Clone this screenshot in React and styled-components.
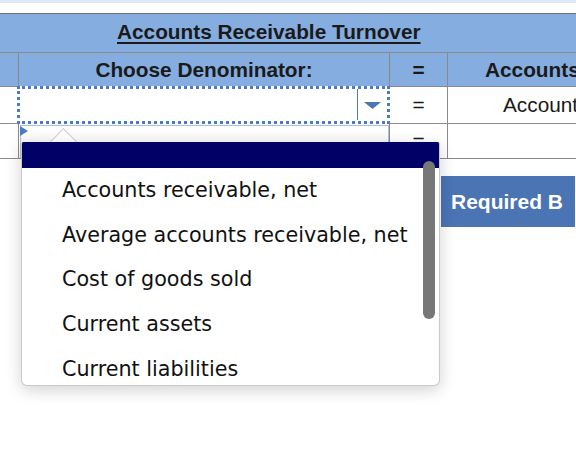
import React from 'react';
import styled, { createGlobalStyle } from 'styled-components';

const Global = createGlobalStyle`
  body {
    margin: 0;
    background: #fff;
    font-family: "Liberation Sans", Arial, sans-serif;
    color: #1a1a1a;
  }
`;

const Page = styled.div`
  position: relative;
  width: 576px;
  height: 456px;
  overflow: hidden;
`;

const TopStrip = styled.div`
  height: 3px;
  background: #dde9f7;
  margin-bottom: 10px;
`;

const Table = styled.div`
  display: grid;
  grid-template-columns: 19px 371px 58px 220px;
  grid-template-rows: 39px 34px 37px 35px;
  border-top: 1px solid #6e6e6e;
  width: 668px;
`;

const TitleCell = styled.div`
  grid-column: 1 / -1;
  background: #85ade0;
  border-bottom: 1px solid #8a8a8a;
  display: flex;
  align-items: center;
  padding-left: 117px;
  padding-bottom: 3px;
  box-sizing: border-box;
  font-size: 20.8px;
  font-weight: bold;
  text-decoration: underline;
  text-underline-offset: 3px;
`;

const Cell = styled.div`
  box-sizing: border-box;
  border-right: 1px solid #8a8a8a;
  border-bottom: 1px solid #8a8a8a;
  background: ${p => (p.$head ? '#85ade0' : '#fff')};
  font-size: 20.8px;
  font-weight: ${p => (p.$head ? 'bold' : 'normal')};
  display: flex;
  align-items: center;
  justify-content: ${p => (p.$left ? 'flex-start' : 'center')};
  padding-left: ${p => p.$pad || 0}px;
  white-space: nowrap;
  overflow: hidden;
  position: relative;
`;

const PlainCell = styled.div`
  position: relative;
  border-bottom: 1px solid #8a8a8a;
  border-right: 1px solid #8a8a8a;
  box-sizing: border-box;
`;

const FocusSelect = styled.div`
  position: absolute;
  left: -2px;
  right: -1px;
  top: -1px;
  bottom: -1px;
  border: 3px dotted #4a7bc4;
  display: flex;
  justify-content: flex-end;
  background: #fff;
`;

const Divider = styled.div`
  width: 1px;
  background: #4a7bc4;
  margin-bottom: 1px;
`;

const ArrowBox = styled.div`
  width: 29px;
  display: flex;
  align-items: center;
  justify-content: center;
  svg {
    display: block;
  }
`;

const IdleSelect = styled.div`
  position: absolute;
  left: 1px;
  right: 0;
  top: 1px;
  bottom: 0;
  border: 1px solid #a9c0e2;
  border-bottom: none;
  background: linear-gradient(#fff, #f1f1f1);
`;

const Marker = styled.div`
  position: absolute;
  left: 1px;
  top: 2px;
  width: 0;
  height: 0;
  border-top: 5px solid transparent;
  border-bottom: 5px solid transparent;
  border-left: 8px solid #4a7bc4;
`;

const Caret = styled.div`
  position: absolute;
  left: 35px;
  top: 8px;
  width: 18px;
  height: 18px;
  background: #fff;
  border-left: 1px solid #cfcfcf;
  border-top: 1px solid #cfcfcf;
  transform: rotate(45deg);
`;

const Tabs = styled.div`
  display: flex;
  margin-top: 17px;
  padding-left: 441px;
`;

const Tab = styled.div`
  height: 51px;
  background: #4a74b4;
  color: #fff;
  font-size: 21px;
  font-weight: bold;
  display: flex;
  align-items: center;
  padding: 0 12px 0 10px;
  white-space: nowrap;
`;

const Popup = styled.div`
  position: absolute;
  left: 21px;
  top: 142px;
  width: 419px;
  height: 244px;
  box-sizing: border-box;
  background: #fff;
  border: 1px solid #cacaca;
  border-top: none;
  border-radius: 2px 2px 6px 6px;
  box-shadow: 0 4px 16px rgba(0, 0, 0, 0.18);
  overflow: hidden;
`;

const PopupHead = styled.div`
  height: 26px;
  background: #000066;
`;

const Option = styled.div`
  height: 44.6px;
  display: flex;
  align-items: center;
  padding-left: 40px;
  font-family: "DejaVu Sans", Verdana, sans-serif;
  font-size: 20.7px;
  color: #111;
  white-space: nowrap;
`;

const Thumb = styled.div`
  position: absolute;
  right: 4px;
  top: 19px;
  width: 12px;
  height: 158px;
  border-radius: 6px;
  background: #777;
`;

const options = [
  'Accounts receivable, net',
  'Average accounts receivable, net',
  'Cost of goods sold',
  'Current assets',
  'Current liabilities',
];

export default function App() {
  return (
    <Page>
      <Global />
      <TopStrip />
      <Table>
        <TitleCell>Accounts Receivable Turnover</TitleCell>

        <Cell $head />
        <Cell $head>Choose Denominator:</Cell>
        <Cell $head>=</Cell>
        <Cell $head $left $pad={37}>Accounts Receivable Turnover</Cell>

        <Cell />
        <PlainCell>
          <FocusSelect>
            <Divider />
            <ArrowBox>
              <svg width="17" height="7" viewBox="0 0 17 7">
                <polygon points="0,0 17,0 8.5,7" fill="#4a76b5" />
              </svg>
            </ArrowBox>
          </FocusSelect>
        </PlainCell>
        <Cell>=</Cell>
        <Cell $left $pad={55}>Accounts receivable turnover</Cell>

        <Cell />
        <PlainCell>
          <IdleSelect />
          <Marker />
          <Caret />
        </PlainCell>
        <Cell>=</Cell>
        <Cell />
      </Table>

      <Tabs>
        <Tab>Required B</Tab>
      </Tabs>

      <Popup>
        <PopupHead />
        {options.map(o => (
          <Option key={o}>{o}</Option>
        ))}
        <Thumb />
      </Popup>
    </Page>
  );
}
